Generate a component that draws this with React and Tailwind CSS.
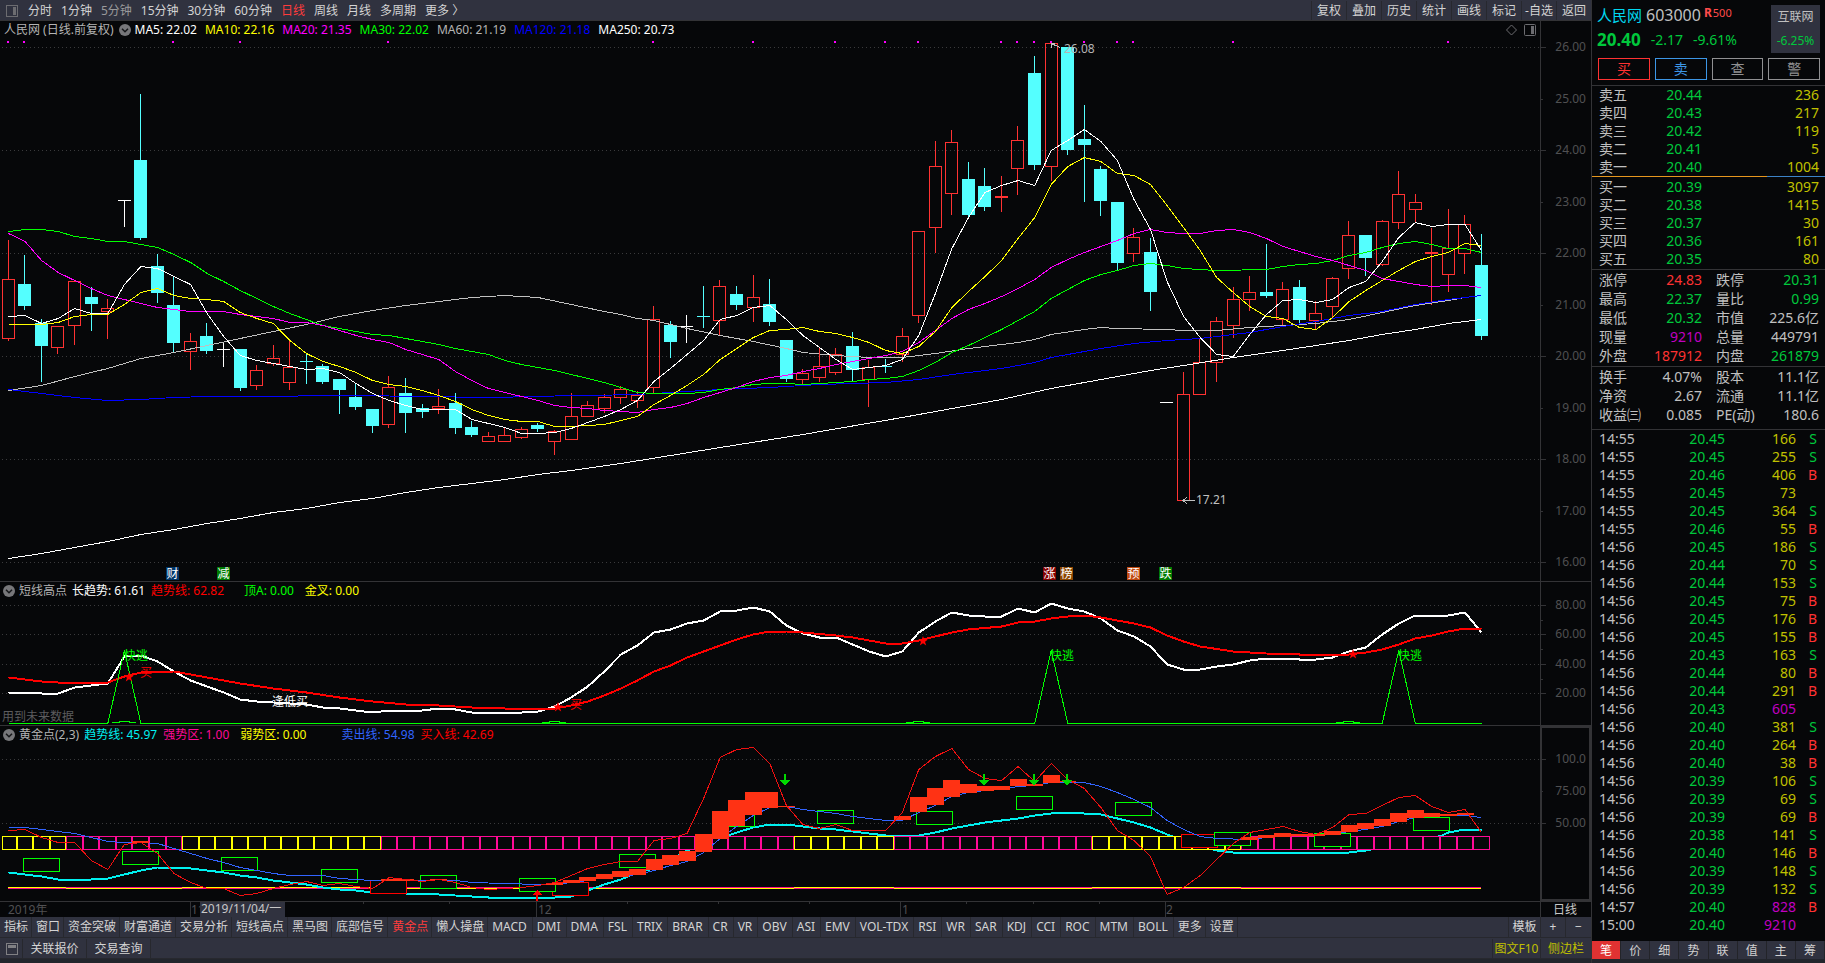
import React from 'react';
import clsx from 'clsx';

const STEP = 16.551;
const barX = (i) => Math.floor(8.3 + STEP * i);
const edgeX = (i) => Math.max(2, Math.round(8.3 + STEP * (i - 0.5)));

// "index,y index,y ..." -> svg points
const toPoints = (series) =>
  series
    .trim()
    .split(/\s+/)
    .map((pair) => {
      const [i, y] = pair.split(',').map(Number);
      return `${(8.5 + STEP * i).toFixed(1)},${y + 0.5}`;
    })
    .join(' ');

// kind (r = up, c = down, w = flat), high, body top, body bottom, low
const candles = [
  ['r', 240, 279, 338, 341], ['c', 255, 284, 306, 310], ['c', 319, 323, 346, 382], ['r', 326, 326, 347, 354],
  ['r', 281, 281, 325, 345], ['c', 287, 297, 304, 331], ['r', 299, 308, 311, 339], ['w', 200, 200, 200, 227],
  ['c', 94, 160, 238, 240], ['c', 254, 266, 293, 303], ['c', 276, 305, 343, 352], ['r', 333, 341, 351, 370],
  ['c', 323, 336, 351, 354], ['w', 342, 349, 349, 367], ['c', 349, 349, 388, 391], ['r', 365, 370, 385, 390],
  ['r', 345, 358, 363, 366], ['r', 339, 367, 382, 390], ['c', 354, 361, 361, 384], ['c', 364, 366, 382, 384],
  ['c', 379, 379, 390, 414], ['c', 383, 397, 407, 410], ['c', 409, 409, 426, 433], ['r', 376, 387, 424, 428],
  ['c', 378, 393, 413, 433], ['c', 404, 408, 412, 418], ['r', 389, 406, 408, 414], ['c', 393, 403, 428, 434],
  ['c', 421, 427, 435, 437], ['r', 432, 436, 441, 441], ['r', 427, 435, 441, 441], ['r', 427, 429, 437, 439],
  ['c', 423, 425, 429, 432], ['r', 430, 431, 441, 455], ['r', 393, 416, 439, 439], ['r', 401, 405, 416, 416],
  ['r', 394, 397, 408, 413], ['r', 386, 389, 397, 404], ['r', 391, 395, 400, 408], ['r', 306, 319, 387, 393],
  ['c', 321, 325, 342, 358], ['w', 315, 326, 326, 343], ['c', 286, 316, 316, 328], ['r', 280, 286, 320, 335],
  ['c', 286, 294, 305, 310], ['r', 275, 297, 307, 322], ['c', 279, 304, 322, 326], ['c', 340, 340, 379, 382],
  ['r', 369, 373, 379, 384], ['r', 348, 366, 377, 382], ['r', 348, 354, 372, 375], ['c', 332, 346, 370, 381],
  ['r', 360, 367, 379, 407], ['c', 359, 366, 366, 373], ['r', 328, 336, 354, 362], ['r', 231, 231, 315, 323],
  ['r', 141, 166, 227, 253], ['r', 130, 142, 193, 215], ['c', 162, 179, 215, 217], ['c', 168, 186, 207, 211],
  ['r', 176, 196, 197, 212], ['r', 126, 140, 168, 195], ['c', 56, 73, 165, 170], ['r', 43, 43, 166, 181],
  ['c', 47, 47, 150, 155], ['c', 105, 139, 145, 202], ['c', 166, 169, 201, 216], ['c', 202, 202, 263, 270],
  ['r', 228, 237, 253, 262], ['c', 238, 252, 292, 311], ['w', 402, 402, 402, 402], ['r', 372, 394, 500, 500],
  ['r', 338, 362, 394, 394], ['r', 317, 321, 362, 382], ['r', 287, 299, 325, 338], ['r', 276, 292, 299, 311],
  ['c', 244, 292, 296, 298], ['r', 282, 289, 319, 325], ['c', 280, 287, 320, 324], ['r', 301, 313, 320, 329],
  ['r', 277, 278, 306, 317], ['r', 221, 235, 268, 279], ['c', 235, 235, 258, 276], ['r', 220, 221, 264, 266],
  ['r', 171, 194, 222, 229], ['r', 194, 202, 209, 222], ['r', 228, 252, 253, 305], ['r', 209, 248, 274, 292],
  ['r', 215, 224, 253, 274], ['c', 234, 265, 336, 340],
];

const candleColor = { r: '#ff3232', c: '#54ffff', w: '#ffffff' };

const maLines = [
  {
    color: '#ffffff',
    data: '0,558 2,553 4,547 6,541 8,534 10,529 12,523 14,518 16,512 18,508 20,502 22,498 24,492 26,487 28,483 30,479 32,474 34,470 37,463 43,447 48,434 54,417 57,408 60,399 63,388 66,379 69,370 71,365 74,357 77,350 79,345 81,340 83,334 85,329 87,323 89,319',
  },
  {
    color: '#c0c0c0',
    data: '0,390 2,385 4,376 6,368 8,358 10,352 12,345 14,338 16,331 18,324 20,316 22,310 24,305 26,301 28,297 30,295 32,297 34,304 36,311 37,314 38,318 39,320 41,328 43,335 45,341 47,348 48,352 50,355 52,357 54,357 56,353 58,348 60,344 61,342 62,339 63,334 65,329 66,327 67,328 70,329 71,330 73,330 75,327 77,325 79,323 81,319 83,312 85,305 87,300 88,297 89,295',
  },
  {
    color: '#0000ff',
    data: '0,389 1,391 2,393 3,395 4,397 6,400 8,399 10,397 12,396 17,396 18,395 22,395 24,396 30,397 31,396 35,395 38,394 40,392 43,389 46,387 49,384 53,382 55,379 57,374 60,368 62,362 63,357 66,348 68,343 70,340 72,338 73,336 75,332 77,326 79,321 81,315 83,311 85,304 87,299 89,295',
  },
  {
    color: '#00ff00',
    data: '0,231 1,229 2,229 3,231 4,236 5,238 6,241 7,241 8,244 9,247 10,254 11,262 12,273 13,281 14,290 15,298 16,306 17,313 18,319 19,325 20,328 21,331 22,334 23,335 24,338 25,341 26,344 27,348 28,351 29,354 30,360 31,364 32,367 33,370 34,374 35,378 36,382 37,387 38,392 39,393 41,393 42,392 43,389 44,387 45,384 46,383 47,383 48,384 49,383 50,382 51,381 52,379 53,378 54,376 55,370 56,362 57,352 58,345 59,337 60,329 61,320 62,311 63,298 64,289 65,280 66,274 67,270 68,265 69,263 70,265 71,268 73,270 76,269 77,266 78,264 79,263 80,260 81,255 82,252 83,247 84,243 85,241 86,244 87,248 88,248 89,252',
  },
  {
    color: '#ff00ff',
    data: '0,233 1,241 2,260 3,272 4,280 5,288 6,295 7,299 9,307 10,309 11,311 13,311 14,314 16,318 17,322 18,322 19,325 20,330 21,335 22,339 23,342 24,349 25,354 26,359 27,371 28,380 29,388 30,392 31,396 32,400 33,405 34,407 35,408 36,410 37,411 38,412 39,409 40,407 41,403 42,397 43,392 44,387 45,381 46,377 47,375 48,371 49,368 50,364 51,361 52,358 53,355 54,351 55,342 56,330 57,318 58,309 59,303 60,296 61,288 62,279 63,267 64,259 65,252 66,246 67,240 68,233 69,229 70,232 71,233 72,233 73,230 74,229 75,232 76,238 77,246 78,251 79,256 80,260 81,265 82,270 83,278 84,281 85,284 86,286 87,285 88,285 89,287',
  },
  {
    color: '#ffff00',
    data: '0,324 2,324 3,322 4,316 5,314 6,314 7,304 8,292 9,288 10,295 11,298 12,299 13,301 14,312 15,318 16,323 17,340 18,353 19,361 20,366 21,372 22,380 23,384 24,386 25,390 26,395 27,401 28,409 29,415 30,419 31,421 32,421 33,426 34,426 35,425 36,424 37,420 38,416 39,404 40,395 41,385 42,374 43,359 44,348 45,337 46,330 47,329 48,327 49,331 50,333 51,337 52,342 53,350 54,353 55,346 56,331 57,307 58,291 59,276 60,260 61,238 62,217 63,184 64,166 65,157 66,161 67,173 68,175 69,184 70,205 71,227 72,250 73,277 74,292 75,306 76,316 77,318 78,327 79,329 80,317 81,301 82,290 83,280 84,270 85,261 86,256 87,252 88,243 89,245',
  },
  {
    color: '#ffffff',
    data: '0,316 1,315 2,323 3,318 4,308 5,313 6,313 7,284 8,266 9,268 10,276 11,284 12,313 13,336 14,355 15,360 16,363 17,366 18,369 19,368 20,372 21,383 22,393 23,400 24,405 25,409 27,409 28,419 29,423 30,427 31,433 32,433 33,432 34,428 35,422 36,416 37,409 38,400 39,381 40,368 41,354 42,340 43,319 44,315 45,307 46,305 47,319 48,335 49,347 50,359 51,369 52,367 53,365 54,359 55,335 56,293 57,248 58,217 59,192 60,185 61,180 62,185 63,150 64,140 65,129 66,141 67,160 68,199 69,229 70,281 71,316 72,337 73,354 74,356 75,334 76,314 77,300 78,299 79,302 80,299 81,287 82,281 83,261 84,237 85,222 86,226 87,224 88,224 89,250',
  },
];

const dots = [0, 1, 10, 14, 23, 39, 45, 50, 53, 55, 60, 61, 62, 63, 65, 67, 68, 74, 87];

const badges = [
  { x: 166, text: '财', fill: '#003568' },
  { x: 217, text: '减', fill: '#007a00' },
  { x: 1043, text: '涨', fill: '#860000' },
  { x: 1060, text: '榜', fill: '#8c4600' },
  { x: 1127, text: '预', fill: '#c04a10' },
  { x: 1159, text: '跌', fill: '#007a00' },
];

const longTrend =
  '0,692 2,693 3,693 4,687 5,685 6,683 7,656 8,655 9,661 10,671 11,680 12,686 13,692 14,699 15,701 17,703 18,704 19,707 20,708 21,710 22,712 23,710 25,710 26,708 27,709 28,712 31,712 32,711 33,706 34,697 35,686 36,671 37,654 38,645 39,632 40,629 41,623 42,620 43,611 44,610 45,607 46,611 47,625 48,633 49,637 50,637 51,644 52,651 53,656 54,651 55,632 56,621 57,612 58,615 59,616 60,616 61,608 62,612 63,603 64,608 65,611 66,618 67,630 68,636 69,646 70,664 71,669 72,669 73,666 74,664 75,660 76,658 77,658 78,659 79,659 80,657 81,651 82,647 83,634 84,623 85,615 87,615 88,612 89,632';
const trendLine =
  '0,677 1,679 2,681 3,682 6,682 7,676 8,672 10,671 11,674 12,677 14,683 16,688 18,692 20,697 22,701 24,704 26,705 28,707 30,708 33,708 34,705 35,701 36,695 37,688 38,680 39,671 40,665 41,657 42,651 43,645 44,639 45,634 46,631 47,631 48,632 50,635 51,637 52,640 53,643 54,643 55,640 56,636 57,632 58,629 60,626 61,622 62,621 63,618 64,616 65,615 66,617 67,620 68,623 69,627 70,635 71,641 72,646 74,651 76,653 78,654 81,654 82,652 83,649 84,644 85,638 86,635 87,631 88,628 89,629';
const topA =
  '0,723 6,723 7,650 8,723 62,723 63,650 64,723 83,723 84,650 85,723 89,723';

const stars = [[129, 677], [558, 707], [923, 641], [1353, 654]];

const goldCyan =
  '0,872 1,874 2,876 3,879 5,879 6,878 7,874 8,870 9,867 10,867 11,868 12,870 13,872 14,875 15,877 16,880 17,882 18,884 19,887 20,889 21,890 22,892 24,893 26,894 27,895 28,896 29,897 33,897 34,896 35,890 36,884 37,879 38,872 39,868 40,860 41,850 42,843 43,838 44,832 45,827 46,824 47,824 48,826 49,828 50,829 51,831 52,833 53,835 54,835 55,835 56,832 57,828 58,825 59,822 60,820 61,818 62,815 63,813 64,812 65,813 66,814 67,818 68,822 69,827 70,834 71,840 72,845 73,850 74,852 81,852 82,850 83,847 86,838 86.6,835 87,832 88,829 89,829';
const goldBlue =
  '0,827 1,827 2,829 3,831 4,833 5,837 6,841 7,842 8,842 9,843 10,848 11,853 12,858 13,862 14,867 15,870 16,873 17,875 19,875 20,878 21,879 22,880 25,880 26,879 27,880 28,882 30,883 32,884 33,884 34,882 35,880 36,877 37,876 38,874 39,870 40,865 41,861 42,852 43,838 44,826 45,815 46,807 47,806 48,809 49,811 50,813 51,816 52,818 53,820 54,820 55,812 56,805 57,796 58,792 59,790 60,789 61,786 62,785 63,782 64,782 65,782 66,786 67,792 68,799 69,807 70,820 71,829 72,836 73,838 75,839 76,837 77,836 78,835 80,834 81,831 82,829 83,826 84,821 85,817 86,816 87,815 88,815 89,817';
const goldRed =
  '0,830 1,829 2,837 3,842 4,842 5,860 6,869 7,844 8,842 9,853 10,873 11,882 12,888 13,888 14,895 15,893 16,888 17,884 18,881 19,885 20,883 21,886 22,888 23,877 24,879 25,881 26,879 27,882 28,887 29,889 31,887 32,885 33,882 34,875 35,868 36,864 37,861 38,861 39,840 40,838 41,833 42,798 43,757 44,749 45,747 46,763 47,805 48,824 49,828 50,824 51,830 53,830 54,812 55,769 56,756 57,748 58,769 59,778 60,780 61,766 62,781 63,763 64,779 65,788 66,807 67,830 68,840 69,856 70,894 71,887 72,875 73,859 74,843 75,832 76,829 77,826 78,831 79,834 80,827 81,814 82,813 83,805 84,797 85,795 86,806 87,812 88,809 89,832';

const bands = [
  { from: 0, to: 3, strong: false },
  { from: 4, to: 10, strong: true },
  { from: 11, to: 22, strong: false },
  { from: 23, to: 47, strong: true },
  { from: 48, to: 53, strong: false },
  { from: 54, to: 65, strong: true },
  { from: 66, to: 74, strong: false },
  { from: 75, to: 89, strong: true },
];

const boxes = [
  [23, 858, '#00ff00'], [122, 851, '#00ff00'], [221, 857, '#00ff00'], [321, 869, '#00ff00'],
  [370, 880, '#ff0000'], [420, 875, '#00ff00'], [552, 882, '#ff0000'], [519, 878, '#00ff00'],
  [619, 854, '#00ff00'], [718, 813, '#00ff00'], [817, 810, '#00ff00'], [916, 811, '#00ff00'],
  [1016, 796, '#00ff00'], [1115, 802, '#00ff00'], [1181, 834, '#ff0000'], [1214, 832, '#00ff00'],
  [1314, 833, '#00ff00'], [1413, 817, '#00ff00'],
];

const blocks = [
  [8, 841, 843], [23, 879, 881], [24, 879, 881], [26, 879, 880], [33, 883, 885], [34, 880, 883],
  [35, 877, 881], [36, 874, 879], [37, 871, 877], [38, 869, 875], [39, 859, 870], [40, 855, 865],
  [41, 851, 861], [42, 834, 852], [43, 811, 839], [44, 800, 826], [45, 792, 815], [46, 792, 808],
  [47, 806, 807], [54, 816, 820], [55, 797, 812], [56, 788, 805], [57, 780, 797], [58, 784, 793],
  [59, 786, 791], [60, 786, 790], [61, 779, 786], [62, 784, 786], [63, 775, 783], [64, 781, 782],
  [75, 837, 840], [76, 835, 838], [77, 833, 837], [78, 834, 836], [79, 834, 836], [80, 831, 835],
  [81, 825, 832], [82, 823, 829], [83, 819, 826], [84, 813, 822], [85, 810, 818], [86, 813, 817],
  [87, 814, 816], [88, 813, 815],
];

const periods = ['分时', '1分钟', '5分钟', '15分钟', '30分钟', '60分钟', '日线', '周线', '月线', '多周期', '更多 〉'];
const tools = ['复权', '叠加', '历史', '统计', '画线', '标记', '-自选', '返回'];
const indicators = [
  '指标', '窗口', '资金突破', '财富通道', '交易分析', '短线高点', '黑马图', '底部信号', '黄金点', '懒人操盘',
  'MACD', 'DMI', 'DMA', 'FSL', 'TRIX', 'BRAR', 'CR', 'VR', 'OBV', 'ASI', 'EMV', 'VOL-TDX', 'RSI', 'WR',
  'SAR', 'KDJ', 'CCI', 'ROC', 'MTM', 'BOLL', '更多', '设置',
];

const asks = [['卖五', '20.44', '236'], ['卖四', '20.43', '217'], ['卖三', '20.42', '119'], ['卖二', '20.41', '5'], ['卖一', '20.40', '1004']];
const bids = [['买一', '20.39', '3097'], ['买二', '20.38', '1415'], ['买三', '20.37', '30'], ['买四', '20.36', '161'], ['买五', '20.35', '80']];

const GREEN = 'text-[#00c83c]';
const RED = 'text-[#ff3232]';
const PURPLE = 'text-[#c000c0]';
const GRAY = 'text-[#c0c0c0]';
const YELLOW = 'text-[#c0c000]';

const stats = [
  ['涨停', '24.83', RED, '跌停', '20.31', GREEN],
  ['最高', '22.37', GREEN, '量比', '0.99', GREEN],
  ['最低', '20.32', GREEN, '市值', '225.6亿', GRAY],
  ['现量', '9210', PURPLE, '总量', '449791', GRAY],
  ['外盘', '187912', RED, '内盘', '261879', GREEN],
];
const finance = [
  ['换手', '4.07%', GRAY, '股本', '11.1亿', GRAY],
  ['净资', '2.67', GRAY, '流通', '11.1亿', GRAY],
  ['收益㈢', '0.085', GRAY, 'PE(动)', '180.6', GRAY],
];

const trades = [
  ['14:55', '20.45', '166', 'S'], ['14:55', '20.45', '255', 'S'], ['14:55', '20.46', '406', 'B'],
  ['14:55', '20.45', '73', ''], ['14:55', '20.45', '364', 'S'], ['14:55', '20.46', '55', 'B'],
  ['14:56', '20.45', '186', 'S'], ['14:56', '20.44', '70', 'S'], ['14:56', '20.44', '153', 'S'],
  ['14:56', '20.45', '75', 'B'], ['14:56', '20.45', '176', 'B'], ['14:56', '20.45', '155', 'B'],
  ['14:56', '20.43', '163', 'S'], ['14:56', '20.44', '80', 'B'], ['14:56', '20.44', '291', 'B'],
  ['14:56', '20.43', '605', ''], ['14:56', '20.40', '381', 'S'], ['14:56', '20.40', '264', 'B'],
  ['14:56', '20.40', '38', 'B'], ['14:56', '20.39', '106', 'S'], ['14:56', '20.39', '69', 'S'],
  ['14:56', '20.39', '69', 'B'], ['14:56', '20.38', '141', 'S'], ['14:56', '20.40', '146', 'B'],
  ['14:56', '20.39', '148', 'S'], ['14:56', '20.39', '132', 'S'], ['14:57', '20.40', '828', 'B'],
  ['15:00', '20.40', '9210', ''],
];

const sideTabs = ['笔', '价', '细', '势', '联', '值', '主', '筹'];

// Horizontal dotted line with a tick on the price axis
const Grid = ({ y }) => (
  <>
    <line x1="2" x2="1540" y1={y + 0.5} y2={y + 0.5} stroke="#3a3a3c" strokeDasharray="1 3" />
    <line x1="1540" x2="1546" y1={y + 0.5} y2={y + 0.5} stroke="#333336" />
  </>
);

const AxisLabel = ({ y, children }) => (
  <text x="1586" y={y + 4} textAnchor="end" fill="#505052" fontSize="12">
    {children}
  </text>
);

const Chevron = () => (
  <svg className="size-3 shrink-0" viewBox="0 0 12 12">
    <circle cx="6" cy="6" r="6" fill="#77777a" />
    <path d="M3 4.8l3 3 3-3" fill="none" stroke="#16171a" strokeWidth="1.5" />
  </svg>
);

const PanelHeader = ({ title, items, tools: extra, boxed }) => (
  <div className="flex h-[18px]">
    <div className="flex flex-1 items-center pl-[3px] text-xs leading-4 whitespace-pre">
      {title}
      {items.map(([text, color]) => (
        <span key={text} className={color}>{text}</span>
      ))}
      {extra}
    </div>
    <div className={clsx('w-[51px] border-l border-[#333336]', boxed && 'border-l-2 border-r-2 border-t-2')}></div>
  </div>
);

const PriceChart = () => (
  <svg className="block h-auto w-full overflow-visible" viewBox="0 39 1591 542" shapeRendering="crispEdges">
    {[26, 24, 22, 20, 18, 16].map((p) => (
      <Grid key={p} y={Math.round(47 + (26 - p) * 51.5)} />
    ))}
    {[25, 23, 21, 19, 17].map((p) => (
      <line key={p} x1="1540" x2="1543" y1={48 + (26 - p) * 51.5} y2={48 + (26 - p) * 51.5} stroke="#333336" />
    ))}
    {[26, 25, 24, 23, 22, 21, 20, 19, 18, 17, 16].map((p) => (
      <AxisLabel key={p} y={Math.round(47 + (26 - p) * 51.5)}>{p.toFixed(2)}</AxisLabel>
    ))}
    <line x1="1540.5" x2="1540.5" y1="39" y2="581" stroke="#333336" />

    {candles.map(([kind, high, top, bottom, low], i) => {
      const x = barX(i);
      const color = candleColor[kind];
      return (
        <g key={i} stroke={color} fill={kind === 'c' ? color : 'none'}>
          {high < top && <line x1={x + 0.5} x2={x + 0.5} y1={high} y2={top} />}
          {low > bottom && <line x1={x + 0.5} x2={x + 0.5} y1={bottom} y2={low} />}
          {top === bottom && <line x1={x - 6} x2={x + 7} y1={top + 0.5} y2={top + 0.5} />}
          {top < bottom && kind === 'r' && <rect x={x - 5.5} y={top + 0.5} width="12" height={bottom - top} />}
          {top < bottom && kind === 'c' && <rect x={x - 6} y={top} width="13" height={bottom - top} stroke="none" />}
        </g>
      );
    })}

    {maLines.map((line, i) => (
      <polyline key={i} points={toPoints(line.data)} fill="none" stroke={line.color} />
    ))}
    {dots.map((i) => (
      <rect key={i} x={barX(i) - 1} y="41" width="2" height="2" fill="#ff00ff" />
    ))}

    <path d="M1060 47.5L1051 43.5M1051 43.5h4M1051 43.5v4" fill="none" stroke="#c0c0c0" />
    <text x="1064" y="53" fill="#b4b4b4" fontSize="12">26.08</text>
    <path d="M1195 500.5h-12M1187 497.5l-4 3l4 3" fill="none" stroke="#c0c0c0" />
    <text x="1196" y="504" fill="#c0c0c0" fontSize="12">17.21</text>

    {badges.map((b) => (
      <g key={b.x}>
        <rect x={b.x} y="567" width="13" height="13" fill={b.fill} />
        <text x={b.x + 6.5} y="578" textAnchor="middle" fill="#ffffff" fontSize="12">{b.text}</text>
      </g>
    ))}
  </svg>
);

const TrendChart = () => (
  <svg className="block h-auto w-full overflow-visible" viewBox="0 600 1591 125" shapeRendering="crispEdges">
    {[[605, '80.00'], [634, '60.00'], [664, '40.00'], [693, '20.00']].map(([y, label]) => (
      <g key={y}>
        <Grid y={y} />
        <AxisLabel y={y}>{label}</AxisLabel>
      </g>
    ))}
    {[620, 649, 679].map((y) => (
      <line key={y} x1="1540" x2="1543" y1={y + 0.5} y2={y + 0.5} stroke="#333336" />
    ))}
    <line x1="1540.5" x2="1540.5" y1="600" y2="725" stroke="#333336" />
    <text x="2" y="721" fill="#5c5c5e" fontSize="12">用到未来数据</text>

    <polyline points={toPoints(longTrend)} fill="none" stroke="#ffffff" strokeWidth="2" />
    <polyline points={toPoints(trendLine)} fill="none" stroke="#ff0000" strokeWidth="2" />
    <polyline points={toPoints(topA)} fill="none" stroke="#00ff00" />
    {[7, 33, 55, 81].map((i) => (
      <path key={i} d={`M${barX(i) - 12} 722.5h7v-1h10v1h7`} fill="none" stroke="#00ff00" />
    ))}
    {stars.map(([x, y]) => (
      <path
        key={x}
        transform={`translate(${x} ${y})`}
        d="M0 -5L1.3 -1.5L5 -1.5L2 .8L3.2 4.5L0 2.2L-3.2 4.5L-2 .8L-5 -1.5L-1.3 -1.5Z"
        fill="#ff0000"
        shapeRendering="auto"
      />
    ))}
    <g fontSize="12">
      <text x="140" y="677" fill="#ff0000">买</text>
      <text x="570" y="709" fill="#ff0000">买</text>
      <text x="124" y="660" fill="#00ff00">快逃</text>
      <text x="1050" y="660" fill="#00ff00">快逃</text>
      <text x="1398" y="660" fill="#00ff00">快逃</text>
      <text x="272" y="706" fill="#ffffff">逢低买</text>
    </g>
  </svg>
);

const GoldChart = () => (
  <svg className="block h-auto w-full" viewBox="0 744 1591 157" shapeRendering="crispEdges">
    <Grid y={759} />
    <Grid y={823} />
    <line x1="1540" x2="1543" y1="791.5" y2="791.5" stroke="#333336" />
    <AxisLabel y={759}>100.0</AxisLabel>
    <AxisLabel y={791}>75.00</AxisLabel>
    <AxisLabel y={823}>50.00</AxisLabel>
    <path d="M1541 744V900H1590V744" fill="none" stroke="#333336" strokeWidth="2" />

    {/* base line, strong zone over weak zone */}
    {bands.map((b) => {
      const x = Math.max(8, edgeX(b.from));
      const end = Math.min(1481, edgeX(b.to + 1));
      return (
        <g key={b.from}>
          <rect x={x} y="887" width={end - x} height="1" fill={b.strong ? '#ff0a8c' : '#ffff00'} />
          <rect x={x} y="888" width={end - x} height="1" fill={b.strong ? '#ffff00' : '#ff0a8c'} />
        </g>
      );
    })}
    <polyline points={toPoints(goldCyan)} fill="none" stroke="#00f0f0" strokeWidth="2" />

    {/* one cell for every bar */}
    {bands.map((b) =>
      Array.from({ length: b.to - b.from + 1 }, (_, n) => b.from + n).map((i) => (
        <rect
          key={i}
          x={edgeX(i) + 0.5}
          y="836.5"
          width={edgeX(i + 1) - edgeX(i) - 1}
          height="13"
          fill="#060709"
          stroke={b.strong ? '#ff0a96' : '#ffff00'}
        />
      ))
    )}
    {boxes.map(([x, y, color]) => (
      <rect key={x} x={x + 0.5} y={y + 0.5} width="36" height="13" fill="#060709" stroke={color} />
    ))}
    <polyline points={toPoints(goldBlue)} fill="none" stroke="#3264ff" />
    {blocks.map(([i, top, bottom]) => (
      <rect key={i} x={edgeX(i)} y={top} width="17" height={bottom - top} fill="#ff3214" />
    ))}
    <polyline points={toPoints(goldRed)} fill="none" stroke="#f01010" />
    {[785, 984, 1034, 1067].map((x) => (
      <path key={x} d={`M${x - 1} 774h2v6h4l-5 6l-5 -6h4z`} fill="#00d800" />
    ))}
    <path d="M536 901v-6h-4l5 -5l5 5h-4v6z" fill="#ff0000" />
  </svg>
);

const TimeAxis = () => (
  <svg className="block h-auto w-full" viewBox="0 901 1591 16" shapeRendering="crispEdges">
    <line x1="0" x2="1591" y1="901.5" y2="901.5" stroke="#333336" />
    {[190, 536, 900, 1165, 1540].map((x) => (
      <line key={x} x1={x + 0.5} x2={x + 0.5} y1="901" y2="917" stroke="#333336" />
    ))}
    {[363, 449, 627, 718, 809, 966, 1033, 1099].map((x) => (
      <line key={x} x1={x + 0.5} x2={x + 0.5} y1="901" y2="904" stroke="#333336" />
    ))}
    <g fontSize="12" fill="#505052">
      <text x="8" y="914">2019年</text>
      <text x="191" y="914">11</text>
      <text x="538" y="914">12</text>
      <text x="902" y="914">1</text>
      <text x="1166" y="914">2</text>
    </g>
    <rect x="200" y="902" width="85" height="15" fill="#30323f" />
    <text x="201" y="913" fontSize="12" fill="#c8c8c8">2019/11/04/一</text>
    <text x="1553" y="914" fontSize="12" fill="#c8c8c8">日线</text>
  </svg>
);

const Book = ({ rows }) => (
  <table className="w-full table-fixed">
    <tbody>
      {rows.map(([label, price, volume]) => (
        <tr key={label} className="h-[18px]">
          <th className="w-[60px] pl-[7px] text-left font-normal">{label}</th>
          <td className={clsx('w-[50px] text-right', GREEN)}>{price}</td>
          <td className={clsx('pr-[6px] text-right', YELLOW)}>{volume}</td>
        </tr>
      ))}
    </tbody>
  </table>
);

const Stats = ({ rows }) => (
  <table className="w-full table-fixed">
    <tbody>
      {rows.map(([l1, v1, c1, l2, v2, c2]) => (
        <tr key={l1} className="h-[19px] whitespace-nowrap">
          <th className="w-[54px] pl-[7px] text-left font-normal">{l1}</th>
          <td className={clsx('w-[56px] text-right', c1)}>{v1}</td>
          <th className="w-[60px] pl-[14px] text-left font-normal">{l2}</th>
          <td className={clsx('pr-[6px] text-right', c2)}>{v2}</td>
        </tr>
      ))}
    </tbody>
  </table>
);

const QuotePanel = () => (
  <aside className="flex w-[233px] shrink-0 flex-col text-sm leading-[18px] text-[#c0c0c0]">
    <div className="flex h-[53px] justify-between pt-[5px] pr-[5px] pl-[5px]">
      <div>
        <div className="flex h-5 items-center whitespace-nowrap">
          <h1 className="text-[15px] text-[#00d8f0]">人民网</h1>
          <span className="ml-1 text-base">603000</span>
          <span className="ml-[3px] flex items-center gap-px self-start text-xs leading-4 text-[#ff4b4b]">
            <b>R</b>
            <span className="text-[11px]">500</span>
          </span>
        </div>
        <div className={clsx('mt-[5px] flex h-5 items-center gap-[10px]', GREEN)}>
          <span className="text-[17px] font-bold">20.40</span>
          <span>-2.17</span>
          <span>-9.61%</span>
        </div>
      </div>
      <a href="#sector" className="flex w-[49px] flex-col items-center justify-between bg-[#30323f] py-[3px] text-xs leading-[18px]">
        <span>互联网</span>
        <span className={GREEN}>-6.25%</span>
      </a>
    </div>
    <div className="mx-[5px] mt-[5px] mb-[5px] grid grid-cols-4 gap-[5px] pl-px">
      <button className="h-[22px] border border-[#ff3232] leading-5 text-[#ff3232]">买</button>
      <button className="h-[22px] border border-[#3c96e6] leading-5 text-[#3c96e6]">卖</button>
      <button className="h-[22px] border border-[#909092] leading-5 text-[#909092]">查</button>
      <button className="h-[22px] border border-[#909092] leading-5 text-[#909092]">警</button>
    </div>
    <div className="border-t border-[#333336]">
      <Book rows={asks} />
    </div>
    <div className="flex h-px">
      <div className="w-3/4 bg-[#e6961e]"></div>
      <div className="flex-1 bg-[#3c82c8]"></div>
    </div>
    <div className="pt-px pb-px">
      <Book rows={bids} />
    </div>
    <div className="border-t border-[#333336] pb-px">
      <Stats rows={stats} />
    </div>
    <div className="border-t border-[#333336] pb-[5px]">
      <Stats rows={finance} />
    </div>
    <div className="flex-1 border-t border-[#333336]">
      <table className="w-full table-fixed">
        <tbody>
          {trades.map(([time, price, volume, side], i) => (
            <tr key={i} className="h-[18px]">
              <td className="w-[60px] pl-[7px]">{time}</td>
              <td className={clsx('w-[73px] text-right', GREEN)}>{price}</td>
              <td className={clsx('text-right', Number(volume) >= 500 ? PURPLE : YELLOW)}>{volume}</td>
              <td className={clsx('w-[29px] pr-2 text-right', side === 'B' ? RED : GREEN)}>{side}</td>
            </tr>
          ))}
        </tbody>
      </table>
    </div>
    <nav className="grid h-[18px] grid-cols-8 bg-[#30323f] text-xs">
      {sideTabs.map((tab, i) => (
        <button
          key={tab}
          className={clsx('border-r border-[#232429] pt-px leading-[17px]', i === 0 ? 'bg-[#e03232] text-white' : 'text-[#d0d0d0]')}
        >
          {tab}
        </button>
      ))}
    </nav>
    <div className="h-1 bg-[#22252c]"></div>
  </aside>
);

export default function App() {
  return (
    <div className="flex min-h-screen bg-[#060709] font-['Noto_Sans','Noto_Sans_CJK_SC',sans-serif]">
      <main className="flex min-w-0 flex-1 flex-col border-r border-[#333336]">
        {/* Period toolbar */}
        <div className="flex h-[21px] justify-between border-b border-[#333336] bg-[#30323f] pt-px text-xs text-[#d4d4d4]">
          <nav className="flex items-center gap-[9px] pl-[6px] whitespace-nowrap">
            <svg className="mr-px size-3" viewBox="0 0 12 12" shapeRendering="crispEdges">
              <rect x=".5" y=".5" width="11" height="11" rx="1" fill="none" stroke="#6c6c70" />
              <rect x="7" y="2" width="3" height="8" fill="#6c6c70" />
            </svg>
            {periods.map((p) => (
              <button
                key={p}
                className={clsx(p === '日线' && 'text-[#ff3c3c]', p === '5分钟' && 'text-[#9a9a9c]')}
              >
                {p}
              </button>
            ))}
          </nav>
          <div className="flex">
            {tools.map((t) => (
              <button key={t} className="w-[35px] border-l border-[#27282e]">{t}</button>
            ))}
          </div>
        </div>

        {/* Daily candles */}
        <section>
          <PanelHeader
            title={
              <>
                <span className="mr-[5px] pl-px text-[#b4b4b4]">人民网 (日线.前复权)</span>
                <Chevron />
              </>
            }
            items={[
              ['MA5: 22.02', 'ml-1 text-white'],
              ['MA10: 22.16', 'ml-2 text-[#ffff00]'],
              ['MA20: 21.35', 'ml-2 text-[#ff00ff]'],
              ['MA30: 22.02', 'ml-2 text-[#00ff00]'],
              ['MA60: 21.19', 'ml-2 text-[#b4b4b4]'],
              ['MA120: 21.18', 'ml-2 text-[#0000ff]'],
              ['MA250: 20.73', 'ml-2 text-white'],
            ]}
            tools={
              <svg className="mr-1 ml-auto h-3 w-[30px]" viewBox="0 0 30 12">
                <path d="M5.5 1L10.5 6L5.5 11L.5 6Z" fill="none" stroke="#6c6c70" />
                <rect x="18.5" y=".5" width="11" height="11" rx="1" fill="none" stroke="#6c6c70" />
                <rect x="25" y="2" width="3" height="8" fill="#6c6c70" />
              </svg>
            }
          />
          <PriceChart />
        </section>

        <section className="border-t border-[#333336]">
          <PanelHeader
            title={
              <>
                <Chevron />
                <span className="ml-1 text-[#b4b4b4]">短线高点</span>
              </>
            }
            items={[
              ['长趋势: 61.61', 'ml-[5px] text-white'],
              ['趋势线: 62.82', 'ml-[6px] text-[#ff0000]'],
              ['顶A: 0.00', 'ml-5 text-[#00ff00]'],
              ['金叉: 0.00', 'ml-[11px] text-[#ffff00]'],
            ]}
          />
          <TrendChart />
        </section>

        <section className="border-t border-[#333336]">
          <PanelHeader
            boxed
            title={
              <>
                <Chevron />
                <span className="ml-1 text-[#b4b4b4]">黄金点(2,3)</span>
              </>
            }
            items={[
              ['趋势线: 45.97', 'ml-[5px] text-[#00f0f0]'],
              ['强势区: 1.00', 'ml-[6px] text-[#ff0a96]'],
              ['弱势区: 0.00', 'ml-[11px] text-[#ffff00]'],
              ['卖出线: 54.98', 'ml-[35px] text-[#3264ff]'],
              ['买入线: 42.69', 'ml-[6px] text-[#ff0000]'],
            ]}
          />
          <GoldChart />
          <TimeAxis />
        </section>

        {/* Indicator bar */}
        <div className="flex h-[21px] border-b border-[#27282e] bg-[#30323f] text-xs leading-[18px] text-[#d4d4d4]">
          {indicators.map((name) => (
            <button
              key={name}
              className={clsx(
                'border-r border-[#27282e] pl-1 whitespace-nowrap',
                /^[A-Z]/.test(name) ? 'pr-[5px]' : 'pr-[3px]',
                name === '黄金点' && 'text-[#ff3c3c]'
              )}
            >
              {name}
            </button>
          ))}
          <button className="ml-auto w-8 border-l border-[#27282e]">模板</button>
          <button className="w-[25px] border-l border-[#27282e]">+</button>
          <button className="w-[26px] border-l border-[#27282e]">−</button>
        </div>

        <div className="flex h-[21px] border-b border-[#27282e] bg-[#30323f] pt-px text-xs text-[#d4d4d4]">
          <div className="flex w-[23px] items-center border-r border-[#27282e] pl-[6px]">
            <svg className="size-3" viewBox="0 0 12 12" shapeRendering="crispEdges">
              <rect x=".5" y=".5" width="11" height="11" rx="1" fill="none" stroke="#808084" />
              <rect x="2" y="2" width="8" height="3" fill="#808084" />
            </svg>
          </div>
          <button className="w-16 border-r border-[#27282e]">关联报价</button>
          <button className="w-16 border-r border-[#27282e]">交易查询</button>
          <button className="ml-auto w-12 border-l border-[#27282e] whitespace-nowrap text-[#c0c000]">图文F10</button>
          <button className="w-[51px] border-l border-[#27282e] text-[#c0c000]">侧边栏</button>
        </div>
        <div className="flex-1 bg-[#22252c]"></div>
      </main>
      <QuotePanel />
    </div>
  );
}
